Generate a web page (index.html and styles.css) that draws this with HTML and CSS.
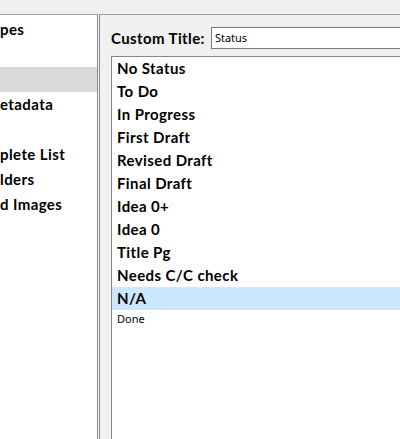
FILE: index.html
```html
<!DOCTYPE html>
<html>
<head>
<meta charset="utf-8">
<link rel="stylesheet" href="styles.css">
</head>
<body>
<div class="window">
  <div class="topbar"></div>
  <div class="main">
    <div class="sidebar">
      <div class="side-item">pes</div>
      <div class="side-item"></div>
      <div class="side-item selected"></div>
      <div class="side-item">etadata</div>
      <div class="side-item"></div>
      <div class="side-item">plete List</div>
      <div class="side-item">lders</div>
      <div class="side-item">d Images</div>
    </div>
    <div class="splitter"></div>
    <div class="pane">
      <div class="title-row">
        <label class="title-label">Custom Title:</label>
        <div class="title-input">Status</div>
      </div>
      <div class="listbox">
        <div class="row">No Status</div>
        <div class="row">To Do</div>
        <div class="row">In Progress</div>
        <div class="row">First Draft</div>
        <div class="row">Revised Draft</div>
        <div class="row">Final Draft</div>
        <div class="row">Idea 0+</div>
        <div class="row">Idea 0</div>
        <div class="row">Title Pg</div>
        <div class="row">Needs C/C check</div>
        <div class="row active">N/A</div>
        <div class="row small">Done</div>
      </div>
    </div>
  </div>
</div>
</body>
</html>
```
FILE: styles.css
```css
html, body {
  margin: 0;
  padding: 0;
  width: 400px;
  height: 439px;
  overflow: hidden;
  background: #f0f0f0;
}
.window {
  display: flex;
  flex-direction: column;
  width: 400px;
  height: 439px;
  font-family: "Lato", "Noto Sans", sans-serif;
  font-weight: 700;
  color: #000;
}
.topbar {
  height: 14px;
  flex: none;
}
.main {
  display: flex;
  flex: 1;
  min-height: 0;
}
.sidebar {
  width: 97px;
  flex: none;
  background: #fff;
  border-top: 1px solid #a0a0a0;
  border-right: 1px solid #8c8c96;
  padding-top: 2px;
  font-size: 15px;
  letter-spacing: 0.4px;
  overflow: hidden;
  white-space: nowrap;
}
.side-item {
  height: 25px;
  line-height: 24px;
}
.side-item.selected {
  background: #d9d9d9;
}
.splitter {
  width: 1px;
  flex: none;
}
.pane {
  flex: 1;
  min-width: 0;
  border-top: 1px solid #a0a0a0;
  border-left: 1px solid #8c8c96;
  padding: 12px 0 0 11px;
  display: flex;
  flex-direction: column;
}
.title-row {
  display: flex;
  align-items: center;
  gap: 6px;
  height: 22px;
}
.title-label {
  font-size: 15px;
  letter-spacing: 0.4px;
  white-space: nowrap;
}
.title-input {
  flex: 1;
  height: 20px;
  line-height: 20px;
  background: #fff;
  border: 1px solid #7a7a7a;
  border-right: none;
  padding-left: 3px;
  font-family: "Noto Sans", "Open Sans", sans-serif;
  font-weight: 400;
  font-size: 11px;
}
.listbox {
  flex: 1;
  margin-top: 7px;
  background: #fff;
  border-top: 1px solid #828790;
  border-left: 1px solid #828790;
  padding-top: 0;
}
.row {
  height: 23px;
  line-height: 23px;
  padding-left: 5px;
  font-size: 15px;
  letter-spacing: 0.4px;
  white-space: nowrap;
}
.row.active {
  background: #cce8ff;
}
.row.small {
  height: 16px;
  line-height: 18px;
  font-family: "Noto Sans", "Open Sans", sans-serif;
  font-weight: 400;
  font-size: 11px;
  letter-spacing: 0;
}
```
